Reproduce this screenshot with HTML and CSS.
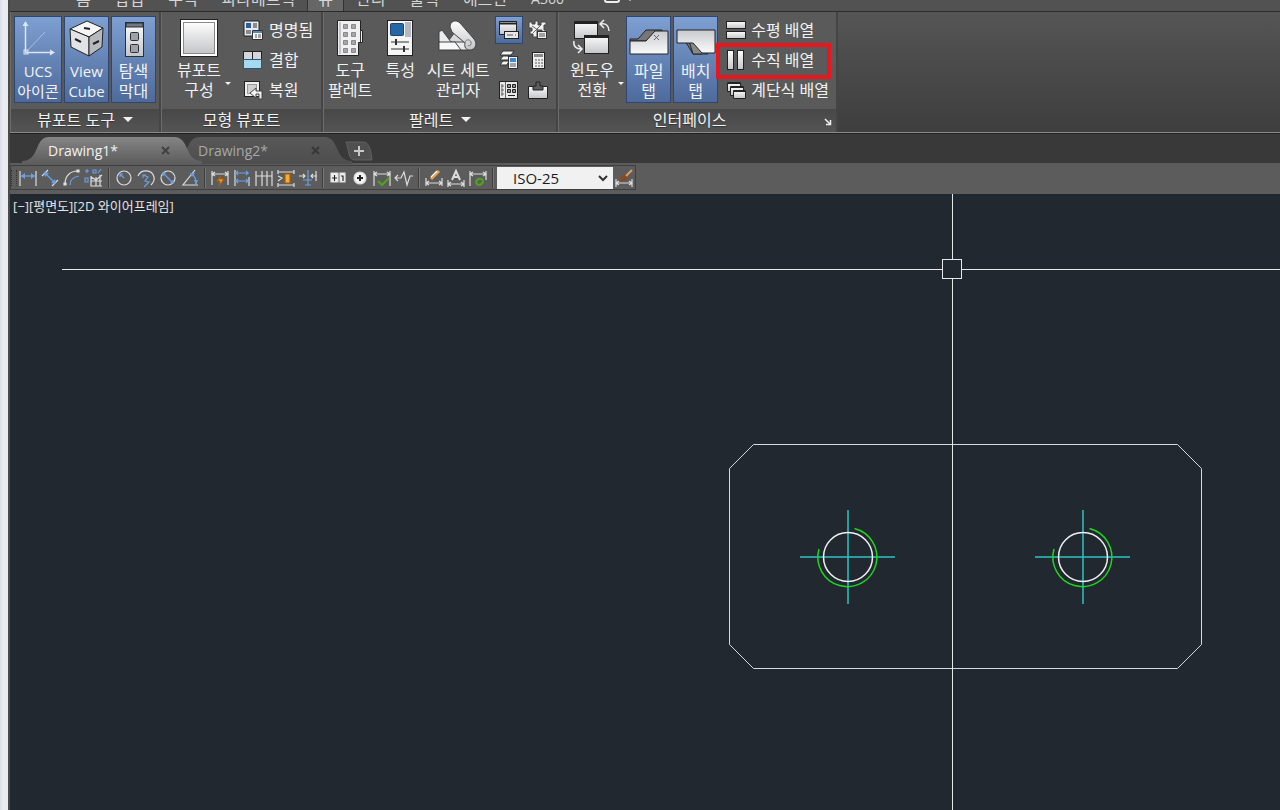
FILE: index.html
```html
<!DOCTYPE html>
<html lang="ko">
<head>
<meta charset="utf-8">
<meta name="viewport" content="width=device-width, initial-scale=1">
<title>Drawing1</title>
<link rel="stylesheet" href="styles.css">
</head>
<body>
<div class="edge"></div>
<div class="app">
<svg class="defs" aria-hidden="true">
<defs>
<linearGradient id="silver" x1="0" y1="0" x2="0" y2="1"><stop offset="0" stop-color="#fdfdfd"/><stop offset="1" stop-color="#c3c5c8"/></linearGradient>
<linearGradient id="pane" x1="0" y1="0" x2="0" y2="1"><stop offset="0" stop-color="#c8cace"/><stop offset="1" stop-color="#fafafa"/></linearGradient>
<linearGradient id="tab-on" x1="0" y1="0" x2="0" y2="1"><stop offset="0" stop-color="#858585"/><stop offset="1" stop-color="#5c5c5c"/></linearGradient>
<linearGradient id="tab-off" x1="0" y1="0" x2="0" y2="1"><stop offset="0" stop-color="#585858"/><stop offset="1" stop-color="#4e4e4e"/></linearGradient>
</defs>
</svg>

<nav class="menu">
<a href="#">홈</a>
<a href="#">삽입</a>
<a href="#">주석</a>
<a href="#">파라메트릭</a>
<a href="#" class="active">뷰</a>
<a href="#">관리</a>
<a href="#">출력</a>
<a href="#">애드인</a>
<a href="#" class="latin">A360</a>
<button class="menu-more" aria-label="리본 최소화"><svg width="32" height="12"><rect x="1" y="-7" width="14" height="10" rx="2" fill="#4b4b4b" stroke="#eee" stroke-width="2"/><path d="M23 -1h6l-3 3z" fill="#eee"/></svg></button>
</nav>

<div class="ribbon">
<section class="panel">
<div class="panel-body">
<button class="big on ucs"><svg width="40" height="40" fill="none" stroke="#dce5f2"><path d="M7.500 4v29.500H35" stroke-width="1.500"/><path d="M8 33L27 13" stroke="#a9bfdf"/><path d="M4.500 7l3-5 3 5zM32 30.500l5 3-5 3z" fill="#dce5f2" stroke="none"/><rect x="6" y="31" width="4" height="4"/></svg><span>UCS<br>아이콘</span></button>
<button class="big on"><svg width="40" height="40" stroke="#222" stroke-linejoin="round"><path d="M20 2l16 7-14 9L3 10z" fill="#f5f5f5"/><path d="M3 10l19 8v19L4 28z" fill="#e2e3e5"/><path d="M36 9L22 18v19l13-9z" fill="#b7babd"/><path d="M17 9l6 1M8 20l6 3M26 25l6-3" stroke-width="2"/></svg><span>View<br>Cube</span></button>
<button class="big on"><svg width="40" height="40" fill="url(#silver)" stroke="#2b2f36"><rect x="11.500" y="3.500" width="18" height="34"/><path d="M12 4h17v4H12z" fill="#6f7885"/><rect x="16.500" y="13.500" width="8" height="8" rx="1" fill="#9ea3aa"/><rect x="16.500" y="25.500" width="8" height="8" rx="1" fill="#9ea3aa"/></svg><span>탐색<br>막대</span></button>
</div>
<h2>뷰포트 도구 <i class="caret"></i></h2>
</section>

<section class="panel">
<div class="panel-body viewports">
<button class="big drop"><svg width="40" height="40"><rect x="1.500" y="1.500" width="37" height="37" fill="#fff" stroke="#222"/><rect x="4.500" y="4.500" width="31" height="31" fill="url(#silver)" stroke="#888"/></svg><span>뷰포트<br>구성</span></button>
<div class="rows">
<button class="small"><svg width="20" height="20"><path d="M1 1h15v15H1z" fill="#e9e9e9" stroke="#222"/><path d="M3 3h5v5H3z" fill="#2d5c9c"/><path d="M10 3h4v5h-4zM3 10h5v4H3z" fill="#858b94"/><path d="M9.500 10.500h10v9h-10z" fill="#f5f5f5" stroke="#333"/><path d="M10 11h9v2h-9z" fill="#5486c0"/><path d="M12 15h2m1 0h3m-6 2h2m1 0h3" stroke="#555"/></svg>명명됨</button>
<button class="small"><svg width="20" height="20" stroke="#222"><rect x=".500" y="1.500" width="9" height="8" fill="#d5d6dc"/><rect x="9.500" y="1.500" width="9" height="8" fill="#d5d6dc"/><rect x=".500" y="9.500" width="18" height="9" fill="#a6daf1" stroke="#29567d"/></svg>결합</button>
<button class="small"><svg width="20" height="20"><rect x="1.500" y="1.500" width="15" height="15" fill="#eee" stroke="#222"/><rect x="4.500" y="4.500" width="9" height="9" fill="#cfcfcf" stroke="#999"/><path d="M7 13l6-5v3h6v8h-3v-5h-3v4z" fill="#f3f3f3" stroke="#444"/></svg>복원</button>
</div>
</div>
<h2>모형 뷰포트</h2>
</section>

<section class="panel">
<div class="panel-body palettes">
<button class="big"><svg width="40" height="40"><path d="M7.500 2.500h23v10h2v12h-4v13h-21z" fill="#f0f0f0" stroke="#222"/><path d="M9 4h2v32H9z" fill="#c4c4c4"/><path d="M30.500 12v12" stroke="#333"/><g fill="#a3a6ad" stroke="#888"><path d="M13.500 6.500h4v4h-4zM21.500 6.500h4v4h-4zM13.500 14.500h4v4h-4zM21.500 14.500h4v4h-4zM13.500 22.500h4v4h-4zM21.500 22.500h4v4h-4zM13.500 30.500h4v4h-4zM21.500 30.500h4v4h-4z"/></g></svg><span>도구<br>팔레트</span></button>
<button class="big"><svg width="40" height="40"><rect x="7.500" y="2.500" width="25" height="35" fill="#f5f5f5" stroke="#222"/><path d="M25 4h6v15h-6z" fill="#b5b8bf"/><rect x="10.500" y="5.500" width="13" height="12" rx="1" fill="#2566a5" stroke="#174575"/><path d="M11 24h18M11 31h18" stroke="#333"/><path d="M16 21v6M24 28v6" stroke="#333" stroke-width="2"/></svg><span>특성</span></button>
<button class="big wide"><svg width="40" height="40" stroke="#444" stroke-linejoin="round"><path d="M1 14v18h30l4-4-18-14-6 8z" fill="#d7dadd"/><path d="M1 14l3-2 9 12 22 0 1 4-5 4H8L1 23z" fill="#e9ebec"/><path d="M1 24h16l6 8H1z" fill="#f8f8f8"/><path d="M12 9c0-6 6-8 10-4l14 16c4 5 1 11-4 11-4 0-6-3-5-7L14 14z" fill="url(#silver)"/><path d="M27 25c0-4 5-4 6-1s-2 5-3 3" fill="none" stroke="#777"/></svg><span>시트 세트<br>관리자</span></button>
<div class="grid">
<button class="tool on" aria-label="명령행"><svg width="20" height="20" stroke="#222"><rect x=".500" y="1.500" width="17" height="13" fill="url(#silver)"/><path d="M1 3.500h16" stroke-width="2"/><rect x="5.500" y="11.500" width="14" height="7" fill="#e8e8e8"/><path d="M8 15h6m2 0h1" stroke="#555"/></svg></button>
<button class="tool" aria-label="표식 세트 관리자"><svg width="20" height="20"><path d="M1 2h3v2h3V1h3v4h3V2h5v3h-2v5h2v4h-4v-4H9v7H5v-3H2v-3h2V8H1z" fill="#f1f1f1" stroke="#444"/><path d="M4 6l9 6M13 5l-8 8" stroke="#666"/><rect x="9.500" y="11.500" width="9" height="7" fill="#eee" stroke="#333"/><path d="M11 14h6m-6 2h6" stroke="#555"/></svg></button>
<button class="tool" aria-label="도면층 특성"><svg width="20" height="20"><path d="M4 1h11l-3 4H1zM4 6h9l-3 4H1zM4 11h6l-2 4H1z" fill="#f4f4f4" stroke="#333"/><rect x="9.500" y="6.500" width="9" height="12" fill="#eef3f8" stroke="#333"/><path d="M11 8h6v4h-6z" fill="#3f87d0"/><path d="M11 14h6m-6 2h6" stroke="#555"/></svg></button>
<button class="tool" aria-label="계산기"><svg width="20" height="20"><rect x="4.500" y="2.500" width="12" height="16" fill="#eee" stroke="#222"/><path d="M6 4h9v3H6z" fill="#8a8a8a"/><path d="M7 10h2m1 0h2m1 0h2M7 13h2m1 0h2m1 0h2M7 16h2m1 0h2m1 0h2" stroke="#555"/></svg></button>
<button class="tool" aria-label="디자인센터"><svg width="20" height="20" stroke="#222"><rect x=".500" y="1.500" width="18" height="17" fill="#e8e8e8"/><path d="M6.500 2v16M3 4v12M2 6h3m-3 4h3m-3 4h3" stroke="#666"/><path d="M8.500 4.500h3v3h-3zM13.500 4.500h3v3h-3zM8.500 9.500h3v3h-3zM13.500 9.500h3v3h-3z" fill="#8d96a4"/><path d="M9 15.500h7"/></svg></button>
<button class="tool" aria-label="클립보드"><svg width="20" height="20"><path d="M.500 6.500h19v12h-19z" fill="url(#silver)" stroke="#222"/><path d="M5 10V6h3V2h4v4h3v4z" fill="#5c5c5c" stroke="#222"/></svg></button>
</div>
</div>
<h2>팔레트 <i class="caret"></i></h2>
</section>

<section class="panel">
<div class="panel-body windows">
<button class="big drop switch"><svg width="40" height="40"><rect x="2.500" y="3.500" width="23" height="17" fill="url(#silver)" stroke="#222"/><path d="M2 3h24v3H2z" fill="#222"/><rect x="12.500" y="17.500" width="24" height="18" fill="url(#silver)" stroke="#222"/><path d="M12 17h25v3H12z" fill="#222"/><path d="M29 6c5-1 8 2 8 7M32 2l-4 4 4 4M2 23c-1 5 2 8 7 8M6 27l4 4-4 4" fill="none" stroke="#eee" stroke-width="1.500"/></svg><span>윈도우<br>전환</span></button>
<button class="big on"><svg width="40" height="40" stroke="#222"><path d="M1 20h8l8-9h16v11H1z" fill="#777"/><path d="M1 22h16l9-10h13v23H1z" fill="url(#pane)"/><path d="M25 16l5 5m0-5l-5 5" stroke="#666"/></svg><span>파일<br>탭</span></button>
<button class="big on"><svg width="40" height="40" stroke="#222"><path d="M4 20h14l8 15h-9l-6-10z" fill="#777"/><path d="M13 22h12l7 13h-15z" fill="#888"/><path d="M1 11h38v23H26l-9-10H1z" fill="url(#pane)"/></svg><span>배치<br>탭</span></button>
<div class="rows">
<button class="small"><svg width="20" height="20" fill="url(#silver)" stroke="#222"><rect x=".500" y="1.500" width="19" height="7"/><rect x=".500" y="11.500" width="19" height="7"/></svg>수평 배열</button>
<button class="small marked"><svg width="20" height="20" fill="url(#silver)" stroke="#222"><rect x="1.500" y=".500" width="6" height="19"/><rect x="11.500" y=".500" width="6" height="19"/></svg>수직 배열</button>
<button class="small"><svg width="20" height="20" fill="url(#silver)" stroke="#222"><path d="M1.500 2.500h13v9h-13z"/><path d="M1 3.500h14"/><path d="M4.500 6.500h13v9h-13z"/><path d="M4 7.500h14"/><path d="M7.500 10.500h12v8h-12z"/><path d="M7 11.500h13"/></svg>계단식 배열</button>
</div>
</div>
<h2 class="with-launcher">인터페이스 <button class="launcher" aria-label="옵션"><svg width="8" height="8" fill="none" stroke="#eee" stroke-width="1.500"><path d="M1 1l5 5M6.500 2v4.500H2"/></svg></button></h2>
</section>
</div>

<div class="files">
<div class="file current">
<svg class="shape" width="180" height="30"><path d="M0 27C18 27 12 3 27 3H152C168 3 162 27 180 27V30H0z" fill="url(#tab-on)"/></svg>
<a href="#">Drawing1*</a>
<button aria-label="닫기"><svg width="10" height="10"><path d="M1 1l7 7m0-7L1 8" stroke="#414141" stroke-width="2"/></svg></button>
</div>
<div class="file">
<svg class="shape" width="180" height="30"><path d="M14 27V17C17 9 20 3 28 3H152C168 3 162 27 180 27V30H14z" fill="url(#tab-off)"/></svg>
<a href="#">Drawing2*</a>
<button aria-label="닫기"><svg width="10" height="10"><path d="M1 1l7 7m0-7L1 8" stroke="#383838" stroke-width="2"/></svg></button>
</div>
<button class="add" aria-label="새 도면"><svg width="28" height="20"><path d="M1 1h17c7 0 8 10 9 18H10C3 19 4 9 1 1z" fill="#505050" stroke="#626262"/><path d="M9 10h10M14 5v10" stroke="#c8c8c8" stroke-width="2"/></svg></button>
</div>

<div class="toolbar-row">
<div class="toolbar">
<i class="grip"></i>
<button aria-label="선형"><svg class="dim"><path d="M2 3v15M18 3v15"/><path class="b" d="M3 8h14"/><path class="bf" d="M3 8l4-3v6zM17 8l-4-3v6z"/></svg></button>
<button aria-label="정렬"><svg class="dim"><path d="M2 8l6-6M12 18l6-6"/><path class="b" d="M6 6l8 8"/><path class="bf" d="M4 4l5 1-4 4zM16 16l-5-1 4-4z"/></svg></button>
<button aria-label="호 길이"><svg class="dim"><path d="M3 16C3 8 8 3 16 3"/><path class="b" d="M8 17c0-5 3-8 9-9"/><path class="w" d="M2 15h2v2H2zM15 2h2v2h-2z"/></svg></button>
<button aria-label="세로좌표"><svg class="dim"><path d="M7 8v10h11M7 13h11M12 9v9M7 9l5 3 6-5M16 7v11"/><path class="b" d="M1 3h4M3 1v4M1 10h3v4H1zM9 2h3v3H9zM14 5l3-4"/></svg></button>
<i class="sep"></i>
<button aria-label="반지름"><svg class="dim"><circle cx="10" cy="10" r="7"/><path class="b" d="M10 10L6 6M6 9V6h3"/></svg></button>
<button aria-label="꺾기"><svg class="dim"><path d="M2 8c3-7 14-7 16 1 1 4-1 6-3 8"/><path class="b" d="M7 7l5 2-3 4 4 1-5 5M7 10V7h3"/></svg></button>
<button aria-label="지름"><svg class="dim"><circle cx="10" cy="10" r="7"/><path class="b" d="M5 5l10 10M5 8V5h3M15 12v3h-3"/></svg></button>
<button aria-label="각도"><svg class="dim"><path d="M15 2L3 17h15"/><path class="b" d="M12 6c3 2 4 6 4 10"/><path class="bf" d="M10 5l5 0-3 4zM16 17l-2-5h4z"/></svg></button>
<i class="sep"></i>
<button aria-label="빠른 작업"><svg class="dim"><path d="M2 3v14M18 3v14M2 6h16M5 4L2 6l3 2M15 4l3 2-3 2"/><path class="o" d="M11 8l-4 5h3l-1 5 5-7h-4z"/></svg></button>
<button aria-label="기준선"><svg class="dim"><path d="M3 2v16M17 9v9"/><path class="b" d="M3 5h14M3 13h14M6 3L4 5l2 2M14 3l2 2-2 2M6 11l-2 2 2 2M14 11l2 2-2 2"/></svg></button>
<button aria-label="연속"><svg class="dim"><path d="M2 3v15M8 3v15M13 3v15M18 3v15M2 8h16"/></svg></button>
<button aria-label="간격"><svg class="dim"><path d="M2 2v4M18 2v4M2 4h16M2 15v4M18 15v4M2 17h16M2 8l4 2-4 3"/><path class="o" d="M9 6h5v9H9z"/></svg></button>
<button aria-label="끊기"><svg class="dim"><path d="M1 8h6M13 8h6M18 3v10M5 6l2 2-2 2M15 6l-2 2 2 2"/><path class="b" d="M10 2v15M7 17h6M5 12h9"/></svg></button>
<i class="sep"></i>
<button aria-label="공차"><svg class="dim"><path class="w" d="M3 5h7v9H3zM12 5h5v9h-5z"/><path d="M4 10h5M6.500 7v6M13 8h2v5" stroke="#222"/></svg></button>
<button aria-label="중심 표식"><svg class="dim"><circle class="w" cx="10" cy="10" r="6"/><path d="M7 10h6M10 7v6" stroke="#222" stroke-width="2"/></svg></button>
<button aria-label="검사"><svg class="dim"><path d="M2 3v15M18 3v15M2 6h16M5 4L2 6l3 2M15 4l3 2-3 2"/><path class="g" d="M6 13l4 4 7-7"/></svg></button>
<button aria-label="꺾인 선형"><svg class="dim"><path d="M2 10h5l3-6 3 13 3-9h3M4 7l-3 3 3 3"/></svg></button>
<i class="sep"></i>
<button aria-label="치수 편집"><svg class="dim"><path d="M2 10v8M18 10v8M2 15h16M5 13l-3 2 3 2M15 13l3 2-3 2"/><path d="M7 11l8-8" stroke="#e3a34f" stroke-width="3"/><path d="M7 9l6-6" stroke="#fff"/></svg></button>
<button aria-label="치수 문자 편집"><svg class="dim"><path d="M2 12v7M18 12v7M2 16h16M5 14l-3 2 3 2M15 14l3 2-3 2"/><path d="M6 12l4-9 4 9M7 9h6" stroke-width="2"/></svg></button>
<button aria-label="치수 업데이트"><svg class="dim"><path d="M2 3v15M18 3v9M2 6h16M5 4L2 6l3 2M15 4l3 2-3 2"/><path class="g" d="M8 14c1-4 6-4 7-1M15 13c-1 5-6 5-7 1"/></svg></button>
<i class="sep"></i>
<div class="style-pick">
<select aria-label="치수 스타일"><option>ISO-25</option></select>
<svg width="12" height="8"><path d="M2 2l4 4 4-4" fill="none" stroke="#333" stroke-width="2"/></svg>
</div>
<button aria-label="치수 스타일 관리"><svg class="dim"><path d="M2 11v8M18 11v8M2 15h16M5 13l-3 2 3 2M15 13l3 2-3 2"/><path d="M5 12c3 0 2-5 6-5l2 3c-2 3-5 3-8 2z" fill="#8a4a1f" stroke="#8a4a1f"/><path d="M12 8l6-6" stroke="#d8a06a" stroke-width="2"/></svg></button>
</div>
</div>

<main class="canvas">
<svg class="drawing">
<defs>
<g id="hole" fill="none">
<path d="M-48 0H47M0 -47V47" stroke="#2cc3c3" stroke-width="1.500"/>
<path d="M6.500 -28.500A29.500 29.500 0 1 1 -29 -8" stroke="#1fd61f" stroke-width="1.500"/>
<circle r="24.500" stroke="#f0f0f0" stroke-width="1.500"/>
</g>
</defs>
<path d="M719.500 274.500L743.500 250.500H1167.500L1191.500 274.500V450.500L1167.500 474.500H743.500L719.500 450.500z" fill="none" stroke="#d5dade"/>
<use href="#hole" x="838" y="363"/>
<use href="#hole" x="1073" y="363"/>
<g class="crosshair">
<rect x="52" y="75" width="880" height="1"/>
<rect x="952" y="75" width="100%" height="1"/>
<rect x="942" y="0" width="1" height="66"/>
<rect x="942" y="85" width="1" height="100%"/>
<rect class="pick" x="932.500" y="65.500" width="19" height="19"/>
</g>
</svg>
<div class="view-label">[−][평면도][2D 와이어프레임]</div>
</main>
</div>
</body>
</html>
```
FILE: styles.css
```css
* { box-sizing: border-box; }

body {
  display: flex;
  min-height: 100vh;
  margin: 0;
  overflow: hidden;
  background: #22282f;
  color: #f2f2f2;
  font: 16px/20px "Open Sans", "Noto Sans CJK KR", sans-serif;
}

a { color: inherit; text-decoration: none; }

button {
  margin: 0;
  padding: 0;
  border: 0;
  background: none;
  color: inherit;
  font: inherit;
}

svg { display: block; flex: none; }

.defs { position: absolute; width: 0; height: 0; }

.edge {
  width: 10px;
  background: linear-gradient(90deg, #dbe2ec 2px, #e9ebee 2px, #e9ebee 8px, #4a4a4a 8px);
}

.app {
  display: flex;
  flex: 1;
  flex-direction: column;
  min-width: 0;
}

/* menu */
.menu {
  display: flex;
  align-items: flex-end;
  height: 12px;
  padding-left: 54px;
  overflow: hidden;
  background: #525252;
  border-bottom: 1px solid #2c2c2c;
  color: #d6d6d6;
}

.menu a { flex: none; padding: 0 12px 2px; }
.menu .active {
  background: #666;
  border: solid #333;
  border-width: 0 1px;
  padding: 0 10px 2px;
}
.menu .latin { font-size: 14px; }
.menu-more { margin-left: 28px; }

/* ribbon */
.ribbon {
  display: flex;
  background: linear-gradient(#555, #3e3e3e);
  border-bottom: 1px solid #8a8a8a;
  text-shadow: 0 1px 1px #333;
}

.panel {
  display: flex;
  flex-direction: column;
  background: #5a5a5a;
  border-left: 1px solid #6c6c6c;
  border-right: 2px solid #454545;
}

.panel-body {
  display: flex;
  gap: 2px;
  height: 97px;
  padding: 4px 3px 0;
}

.panel h2 {
  display: flex;
  align-items: center;
  justify-content: center;
  gap: 8px;
  position: relative;
  height: 23px;
  margin: 0;
  padding-bottom: 2px;
  background: linear-gradient(#484848, #545454);
  font-size: 16px;
  font-weight: normal;
}

.panel .with-launcher { padding-right: 16px; }

.caret {
  border: solid transparent;
  border-width: 5px 5px 0;
  border-top-color: #f2f2f2;
}

.launcher { position: absolute; right: 4px; bottom: 6px; }

.big {
  display: flex;
  flex-direction: column;
  align-items: center;
  gap: 2px;
  position: relative;
  width: 46px;
  height: 87px;
  padding-top: 2px;
  white-space: nowrap;
}

.on {
  background: linear-gradient(#7e9fd2, #4d6a9b);
  border: 1px solid #2f466e;
}

.big.on { width: 45px; padding-top: 2px; }
.big.ucs { width: 48px; }
.ucs, .ucs + .big { font-size: 15px; }

.drop::after {
  content: "";
  position: absolute;
  right: 0;
  top: 66px;
  border: solid transparent;
  border-width: 3px 3px 0;
  border-top-color: #f2f2f2;
}

.rows {
  display: flex;
  flex-direction: column;
  align-items: flex-start;
  gap: 10px;
  padding-top: 4px;
}

.small {
  display: flex;
  align-items: center;
  gap: 6px;
  position: relative;
  height: 20px;
  white-space: nowrap;
}

.viewports { gap: 12px; padding: 4px 8px 0 5px; }
.viewports .big { width: 64px; }

.palettes { gap: 0; padding: 4px 4px 0 1px; }
.palettes .big { width: 50px; }
.palettes .wide { width: 66px; }

.grid {
  display: grid;
  grid-template-columns: 28px 28px;
  grid-auto-rows: 28px;
  gap: 2px 1px;
  margin-left: 4px;
}

.tool {
  display: flex;
  align-items: center;
  justify-content: center;
}

.windows { gap: 2px; padding: 4px 7px 0 1px; }
.windows .switch { width: 64px; }
.windows .rows { padding-left: 6px; }
.windows .small { gap: 5px; }

.marked::after {
  content: "";
  position: absolute;
  inset: -7px -17px -9px -10px;
  border: 4px solid #e8171f;
}

/* drawing tabs */
.files {
  display: flex;
  align-items: center;
  height: 30px;
  padding-left: 26px;
  background: #393939;
  border-top: 1px solid #222;
  font-size: 14px;
}

.file {
  display: flex;
  align-items: center;
  justify-content: space-between;
  position: relative;
  isolation: isolate;
  width: 150px;
  padding: 4px 15px 0 12px;
  color: #a8a8a8;
}

.file.current { z-index: 1; color: #f2f2f2; }

.shape {
  position: absolute;
  left: -14px;
  bottom: -3px;
  z-index: -1;
}

.add { margin: 4px 0 0 9px; }

/* dimension toolbar */
.toolbar-row {
  display: flex;
  height: 31px;
  padding: 2px 0 4px;
  background: #5c5c5c;
}

.toolbar {
  display: flex;
  align-items: center;
  border: 1px solid #3f3f3f;
}

.toolbar button {
  display: flex;
  justify-content: center;
  width: 22px;
}

.grip {
  width: 6px;
  height: 16px;
  border: dotted #333;
  border-width: 0 1px;
}

.sep {
  width: 8px;
  height: 20px;
  background: linear-gradient(90deg, transparent 3px, #3e3e3e 3px, #3e3e3e 4px, #777 4px, #777 5px, transparent 5px);
}

.dim {
  width: 20px;
  height: 20px;
  fill: none;
  stroke: #dcdcdc;
  stroke-width: 1.2;
}

.dim .b { stroke: #68a0e8; }
.dim .bf { fill: #68a0e8; stroke: none; }
.dim .w { fill: #f4f4f4; }
.dim .o { fill: #f5b12d; stroke: #a85a10; }
.dim .g { stroke: #4fa51c; stroke-width: 2; }

.style-pick { position: relative; }
.style-pick select {
  display: block;
  width: 116px;
  height: 22px;
  padding: 0 16px;
  appearance: none;
  border: 0;
  border-radius: 0;
  background: #f1f1f1;
  color: #1c1c1c;
  font: 15px/22px "Open Sans", sans-serif;
}
.style-pick svg { position: absolute; right: 4px; top: 7px; pointer-events: none; }

/* model space */
.canvas {
  flex: 1;
  position: relative;
  overflow: hidden;
  background: #22282f;
}

.drawing { position: absolute; width: 100%; height: 100%; }
.crosshair { fill: #e6e8ea; }
.crosshair .pick { fill: none; stroke: #e6e8ea; }

.view-label {
  position: relative;
  padding: 2px 3px;
  color: #e4e4e4;
  font-size: 13px;
}
```
